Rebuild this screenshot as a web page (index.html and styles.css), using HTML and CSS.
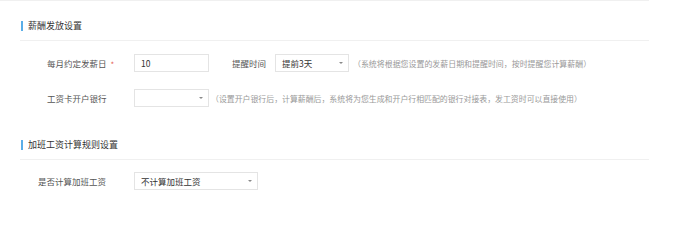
FILE: index.html
```html
<!DOCTYPE html>
<html lang="zh-CN">
<head>
<meta charset="utf-8">
<title>薪酬发放设置</title>
<link rel="stylesheet" href="styles.css">
</head>
<body>
<div class="page">
  <section class="section first">
    <div class="section-head"><span class="bar"></span><span class="title">薪酬发放设置</span></div>
    <div class="row row1">
      <div class="label"><span>每月约定发薪日</span><span class="req">*</span></div>
      <div class="field input">10</div>
      <div class="label2">提醒时间</div>
      <div class="field select w74"><span>提前3天</span><span class="arrow"></span></div>
      <div class="hint">（系统将根据您设置的发薪日期和提醒时间，按时提醒您计算薪酬）</div>
    </div>
    <div class="row row2">
      <div class="label"><span>工资卡开户银行</span></div>
      <div class="field select"><span></span><span class="arrow"></span></div>
      <div class="hint h2">（设置开户银行后，计算薪酬后，系统将为您生成和开户行相匹配的银行对接表，发工资时可以直接使用）</div>
    </div>
  </section>
  <section class="section second">
    <div class="section-head"><span class="bar"></span><span class="title">加班工资计算规则设置</span></div>
    <div class="row row3">
      <div class="label l3"><span>是否计算加班工资</span></div>
      <div class="field select wide"><span>不计算加班工资</span><span class="arrow"></span></div>
    </div>
  </section>
</div>
</body>
</html>
```
FILE: styles.css
```css
html, body {
  margin: 0;
  padding: 0;
  background: #fff;
}
body {
  font-family: "Noto Sans CJK SC", "Noto Sans", sans-serif;
  color: #555;
  width: 680px;
  height: 207px;
  overflow: hidden;
}
.page {
  border-top: 1px solid #f0f0f0;
  padding-left: 20px;
  width: 629px;
}
.section-head {
  display: flex;
  align-items: center;
  height: 12px;
  padding-bottom: 8px;
  border-bottom: 1px solid #f0f0f0;
}
.first .section-head { margin-top: 19px; }
.second .section-head { margin-top: 32px; }
.bar {
  display: block;
  width: 2px;
  height: 10px;
  margin-left: 1px;
  background: #5aaee8;
}
.title {
  margin-left: 5px;
  font-size: 9px;
  line-height: 12px;
  color: #333;
}
.row {
  display: flex;
  align-items: center;
  height: 18px;
}
.row1 { margin-top: 13px; }
.row2 { margin-top: 17px; }
.row3 { margin-top: 12px; }
.label {
  width: 87px;
  padding-left: 27px;
  font-size: 8.5px;
  line-height: 18px;
  display: flex;
  align-items: center;
  white-space: nowrap;
}
.label.l3 {
  width: 96px;
  padding-left: 18px;
}
.req {
  color: #e5605a;
  margin-left: 4px;
  font-size: 8px;
  padding-top: 4px;
}
.field {
  box-sizing: border-box;
  height: 18px;
  width: 75px;
  border: 1px solid #e4e4e4;
  font-size: 8.5px;
  color: #333;
  display: flex;
  align-items: center;
  justify-content: space-between;
  padding: 0 5px 0 6px;
}
.field.w74 { width: 74px; }
.field.wide { width: 124px; }
.arrow {
  width: 0;
  height: 0;
  border-left: 2px solid transparent;
  border-right: 2px solid transparent;
  border-top: 2.5px solid #8a8a8a;
}
.label2 {
  margin-left: 23px;
  width: 43px;
  font-size: 8.5px;
  white-space: nowrap;
}
.hint {
  margin-left: 4px;
  font-size: 7.95px;
  color: #999;
  white-space: nowrap;
}
.hint.h2 { margin-left: 2px; font-size: 7.9px; }
```
